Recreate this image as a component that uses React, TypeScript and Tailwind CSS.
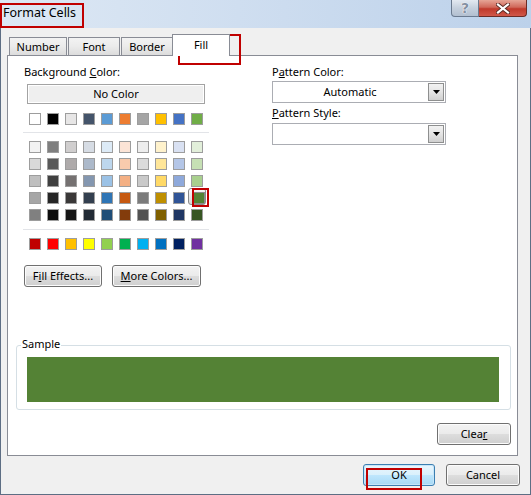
import React from 'react';

const themeRow = [
  'bg-[#ffffff]', 'bg-[#000000]', 'bg-[#e7e6e6]', 'bg-[#44546a]', 'bg-[#5b9bd5]',
  'bg-[#ed7d31]', 'bg-[#a5a5a5]', 'bg-[#ffc000]', 'bg-[#4472c4]', 'bg-[#70ad47]',
];

const shadeRows = [
  ['bg-[#f2f2f2]', 'bg-[#7f7f7f]', 'bg-[#d0cece]', 'bg-[#d6dce4]', 'bg-[#ddebf7]', 'bg-[#fce4d6]', 'bg-[#ededed]', 'bg-[#fff2cc]', 'bg-[#d9e1f2]', 'bg-[#e2efda]'],
  ['bg-[#d9d9d9]', 'bg-[#595959]', 'bg-[#aeaaaa]', 'bg-[#acb9ca]', 'bg-[#bdd7ee]', 'bg-[#f8cbad]', 'bg-[#dbdbdb]', 'bg-[#ffe699]', 'bg-[#b4c6e7]', 'bg-[#c6e0b4]'],
  ['bg-[#bfbfbf]', 'bg-[#404040]', 'bg-[#757171]', 'bg-[#8497b0]', 'bg-[#9bc2e6]', 'bg-[#f4b084]', 'bg-[#c9c9c9]', 'bg-[#ffd966]', 'bg-[#8ea9db]', 'bg-[#a9d08e]'],
  ['bg-[#a6a6a6]', 'bg-[#262626]', 'bg-[#3a3838]', 'bg-[#333f4f]', 'bg-[#2f75b5]', 'bg-[#c65911]', 'bg-[#7b7b7b]', 'bg-[#bf8f00]', 'bg-[#305496]', 'bg-[#548235]'],
  ['bg-[#808080]', 'bg-[#0d0d0d]', 'bg-[#161616]', 'bg-[#222b35]', 'bg-[#1f4e78]', 'bg-[#833c0c]', 'bg-[#525252]', 'bg-[#806000]', 'bg-[#203764]', 'bg-[#375623]'],
];

const standardRow = [
  'bg-[#c00000]', 'bg-[#ff0000]', 'bg-[#ffc000]', 'bg-[#ffff00]', 'bg-[#92d050]',
  'bg-[#00b050]', 'bg-[#00b0f0]', 'bg-[#0070c0]', 'bg-[#002060]', 'bg-[#7030a0]',
];

const btn =
  'flex items-center justify-center rounded-[3px] border border-[#707070] bg-[linear-gradient(#f3f3f3_0%,#ebebeb_48%,#dddddd_52%,#cfcfcf_100%)] shadow-[inset_0_0_0_1px_#fcfcfc] text-black';

function Swatch({ color, selected }: { color: string; selected?: boolean }) {
  if (selected) {
    return (
      <div className="relative w-[12px] h-[12px]">
        <div className="absolute -left-[3px] -top-[4px] w-[18px] h-[17px] rounded-[3px] border border-[#8a8a8a] bg-[linear-gradient(#fafafa,#d6d6d6)]" />
        <div className={`absolute left-[2px] top-0 w-[12px] h-[12px] border border-[#8c8c8c] ${color}`} />
      </div>
    );
  }
  return <div className={`w-[12px] h-[12px] border border-[#9d9d9d] ${color}`} />;
}

function SwatchRow({ colors, selectedIndex }: { colors: string[]; selectedIndex?: number }) {
  return (
    <div className="flex gap-[6px] ml-[5px]">
      {colors.map((c, i) => (
        <Swatch key={i} color={c} selected={i === selectedIndex} />
      ))}
    </div>
  );
}

function Combo({ value }: { value?: string }) {
  return (
    <div className="flex h-[22px] w-[174px] border border-[#abadb3] bg-white">
      <div className="flex-1 flex items-center justify-center leading-[16px]">{value}</div>
      <div className="m-px flex w-[16px] items-center justify-center border border-[#8e8f8f] bg-[linear-gradient(#f2f2f2,#e4e4e4_50%,#d0d0d0)]">
        <svg width="7" height="4" viewBox="0 0 7 4">
          <path d="M0 0 H7 L3.5 4 Z" fill="#000" />
        </svg>
      </div>
    </div>
  );
}

export default function App() {
  return (
    <div className="relative w-[531px] h-[495px] flex flex-col overflow-hidden bg-[#f0f0f0] font-['Noto_Sans',sans-serif] text-[11px] text-black">
      {/* Title bar */}
      <div className="flex h-[28px] shrink-0 items-start bg-[linear-gradient(to_right,#dde8f4,#cfdef0_45%,#bcd1ea)]">
        <span className="pl-[3px] pt-[4px] text-[12.5px] leading-[18px]">Format Cells</span>
        <div className="ml-auto mr-[4px] flex">
          <div className="flex h-[17px] w-[28px] items-center justify-center rounded-bl-[4px] border border-t-0 border-[#6a7a8f] bg-[linear-gradient(#e3e9f1,#c5d0dd_50%,#b2bfd0)]">
            <span className="font-['DejaVu_Sans',sans-serif] text-[14px] font-bold leading-none text-[#8591a2] [text-shadow:0_0_1px_#fff,0_0_1px_#fff,0_0_1px_#fff]">
              ?
            </span>
          </div>
          <div className="flex h-[17px] w-[48px] items-center justify-center rounded-br-[4px] border border-l-0 border-t-0 border-[#6b2b25] bg-[linear-gradient(#e6a596,#d0685a_45%,#c0392b_55%,#d0584a)]">
            <svg width="14" height="11" viewBox="0 0 14 11">
              <path d="M2 1.5 L12 9.5 M12 1.5 L2 9.5" stroke="#5a2a25" strokeWidth="4" strokeLinecap="square" />
              <path d="M2 1.5 L12 9.5 M12 1.5 L2 9.5" stroke="#ffffff" strokeWidth="2.2" strokeLinecap="square" />
            </svg>
          </div>
        </div>
      </div>

      {/* Body */}
      <div className="flex flex-1 flex-col border-x border-b border-[#5d6e84]">
        {/* Tabs */}
        <div className="relative z-10 ml-[8px] mt-[6px] flex h-[22px] items-end">
          <div className="mb-px flex h-[18px] w-[58px] items-center justify-center border border-b-0 border-[#898c95] bg-[linear-gradient(#f3f3f3,#ebebeb_50%,#dcdcdc)] leading-[16px]">
            Number
          </div>
          <div className="mb-px ml-px flex h-[18px] w-[52px] items-center justify-center border border-b-0 border-[#898c95] bg-[linear-gradient(#f3f3f3,#ebebeb_50%,#dcdcdc)] leading-[16px]">
            Font
          </div>
          <div className="mb-px ml-px flex h-[18px] w-[52px] items-center justify-center border border-b-0 border-[#898c95] bg-[linear-gradient(#f3f3f3,#ebebeb_50%,#dcdcdc)] leading-[16px]">
            Border
          </div>
          <div className="-ml-px flex h-[22px] w-[58px] items-start justify-center border border-b-0 border-[#898c95] bg-white pt-[2px] leading-[16px]">
            Fill
          </div>
        </div>

        {/* Tab panel */}
        <div className="-mt-px ml-[6px] flex h-[401px] w-[511px] flex-col border border-[#898c95] bg-white">
          <div className="flex pl-[16px] pt-[8px]">
            {/* Left column */}
            <div className="flex w-[248px] flex-col">
              <div className="leading-[16px]">
                Background <span className="underline">C</span>olor:
              </div>
              <div className="ml-[3px] mt-[4px] flex h-[20px] w-[178px] items-center justify-center border border-[#a3a3a3] bg-[#efefef] shadow-[inset_0_0_0_1px_#ffffff] leading-[16px]">
                No Color
              </div>
              <div className="mt-[9px]">
                <SwatchRow colors={themeRow} />
              </div>
              <div className="-ml-px mt-[7px] h-px w-[186px] bg-[#e2e4e8]" />
              <div className="mt-[8px] flex flex-col gap-[5px]">
                {shadeRows.map((row, i) => (
                  <SwatchRow key={i} colors={row} selectedIndex={i === 3 ? 9 : undefined} />
                ))}
              </div>
              <div className="-ml-px mt-[8px] h-px w-[186px] bg-[#e2e4e8]" />
              <div className="mt-[8px]">
                <SwatchRow colors={standardRow} />
              </div>
              <div className="mt-[15px] flex gap-[10px]">
                <div className={`${btn} h-[22px] w-[78px]`}>
                  F<span className="underline">i</span>ll Effects...
                </div>
                <div className={`${btn} h-[22px] w-[89px]`}>
                  <span className="underline">M</span>ore Colors...
                </div>
              </div>
            </div>

            {/* Right column */}
            <div className="flex w-[174px] flex-col">
              <div className="leading-[16px]">
                P<span className="underline">a</span>ttern Color:
              </div>
              <div className="mt-px">
                <Combo value="Automatic" />
              </div>
              <div className="mt-[2px] leading-[16px]">
                <span className="underline">P</span>attern Style:
              </div>
              <div className="mt-[2px]">
                <Combo />
              </div>
            </div>
          </div>

          {/* Sample group */}
          <div className="relative ml-[8px] mt-[58px] h-[65px] w-[495px] rounded-[3px] border border-[#d5dfe5] pl-[10px] pt-[11px]">
            <span className="absolute -top-[10px] left-[4px] bg-white px-px leading-[16px]">Sample</span>
            <div className="h-[45px] w-[472px] bg-[#548235]" />
          </div>

          <div className="mr-[6px] mt-[13px] self-end">
            <div className={`${btn} h-[22px] w-[74px]`}>
              Clea<span className="underline">r</span>
            </div>
          </div>
        </div>

        {/* Dialog buttons */}
        <div className="mr-[10px] mt-[8px] flex justify-end gap-[11px]">
          <div className="flex h-[22px] w-[72px] items-center justify-center rounded-[3px] border border-[#3c7fb1] bg-[linear-gradient(#eaf6fd,#d9f0fc_50%,#bee6fd_52%,#a7d9f5)] shadow-[inset_0_0_0_1px_#c7e6f9] leading-[16px]">
            OK
          </div>
          <div className={`${btn} h-[22px] w-[74px] leading-[16px]`}>Cancel</div>
        </div>
      </div>

      {/* Red annotation boxes */}
      <div className="absolute left-0 top-[3px] h-[25px] w-[84px] border-2 border-[#c00000]" />
      <div className="absolute left-[178px] top-[34px] h-[31px] w-[63px] border-2 border-[#c00000]" />
      <div className="absolute left-[192px] top-[188px] h-[19px] w-[17px] border-2 border-[#c00000]" />
      <div className="absolute left-[366px] top-[468px] h-[22px] w-[56px] border-2 border-[#c00000]" />
    </div>
  );
}
